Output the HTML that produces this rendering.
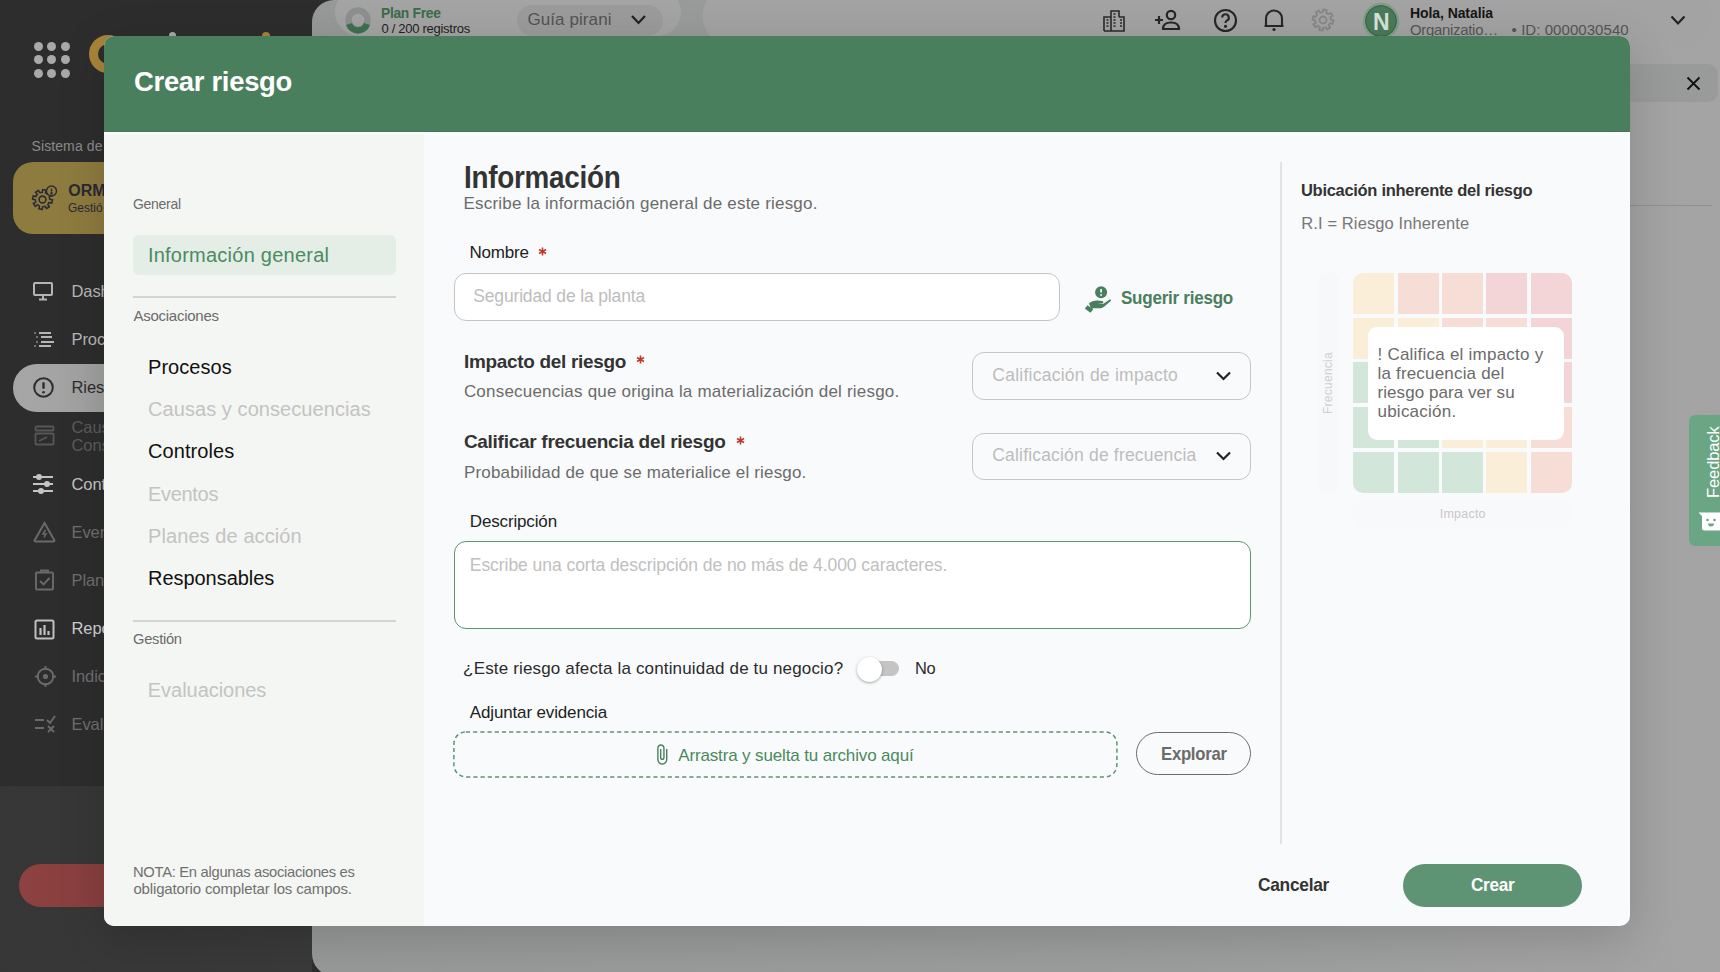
<!DOCTYPE html>
<html><head><meta charset="utf-8">
<style>
*{box-sizing:border-box;margin:0;padding:0}
html,body{width:1720px;height:972px;overflow:hidden;font-family:"Liberation Sans",sans-serif}
body{background:#2d2d2d;position:relative}
.a{position:absolute}
.t{position:absolute;white-space:nowrap;line-height:1}
</style></head>
<body>
<div class="a" style="left:0px;top:786px;width:312px;height:186px;background:linear-gradient(90deg,#363636,#3a3a3a);"></div>
<div class="a" style="left:312px;top:0px;width:1408px;height:976px;background:linear-gradient(90deg,#979998 0%,#9c9e9d 60%,#a3a4a3 100%);border-radius:22px 0 0 22px;"></div>
<div class="a" style="left:335px;top:-12px;width:346px;height:48px;background:#a4a4a4;border-radius:24px;"></div>
<div class="a" style="left:517px;top:5px;width:146px;height:31px;background:#9b9b9b;border-radius:16px;"></div>
<div class="a" style="left:703px;top:-12px;width:1008px;height:56px;background:#a3a3a3;border-radius:26px;"></div>
<div class="a" style="left:1600px;top:64px;width:118px;height:38px;background:#999b9a;border-radius:10px;"></div>
<div class="a" style="left:1630px;top:205px;width:82px;height:1px;background:#909090;"></div>
<svg class="a" style="left:344px;top:6px" width="28" height="28" viewBox="0 0 28 28"><circle cx="14" cy="14" r="9.5" fill="none" stroke="#8e908f" stroke-width="6.5"/><path d="M5 18 A9.5 9.5 0 0 0 23 18" fill="none" stroke="#3f7050" stroke-width="6.5"/></svg>
<div class="t" style="left:381.4px;top:6.0px;font-size:14px;color:#3a6b4b;font-weight:700;letter-spacing:-0.30px;transform:scaleX(0.9879);transform-origin:0 0;">Plan Free</div>
<div class="t" style="left:381.4px;top:22.0px;font-size:13px;color:#1e1e1e;letter-spacing:-0.28px;transform:scaleX(1.0000);transform-origin:0 0;">0 / 200 registros</div>
<div class="t" style="left:527.4px;top:11.2px;font-size:17px;color:#535353;letter-spacing:0.09px;">Guía pirani</div>
<svg class="a" style="left:630px;top:14px" width="17" height="12" viewBox="0 0 17 12"><path d="M2 2 L8.5 9 L15 2" fill="none" stroke="#222" stroke-width="2.2"/></svg>
<svg class="a" style="left:1102px;top:9px" width="24" height="23" viewBox="0 0 24 23" fill="none" stroke="#2a2a2a" stroke-width="1.6">
<path d="M2 22 V8 H9 V22 M9 22 V2 H17 V8 M17 8 H22 V22 H2"/>
<path d="M4.5 11h2M4.5 14h2M4.5 17h2M11.5 5h2M11.5 8h2M11.5 11h2M11.5 14h2M11.5 17h2M18 11h2M18 14h2M18 17h2" stroke-width="1.4"/></svg>
<svg class="a" style="left:1154px;top:9px" width="28" height="22" viewBox="0 0 28 22" fill="none" stroke="#262626" stroke-width="2.2">
<path d="M1 11h8M5 7v8"/><circle cx="17" cy="6" r="4.2"/><path d="M9 20 c0-5 4-6.5 8-6.5 s8 1.5 8 6.5 z"/></svg>
<svg class="a" style="left:1213px;top:8px" width="25" height="25" viewBox="0 0 25 25" fill="none" stroke="#262626" stroke-width="2.1">
<circle cx="12.5" cy="12.5" r="10.5"/><path d="M9.2 9.6 a3.3 3.3 0 1 1 4.6 3 c-1 .5-1.3 1.2-1.3 2.3"/><circle cx="12.5" cy="18.3" r="0.6" fill="#262626"/></svg>
<svg class="a" style="left:1263px;top:8px" width="22" height="24" viewBox="0 0 22 24" fill="none" stroke="#262626" stroke-width="2.1">
<path d="M3 18 V10.5 a8 8 0 0 1 16 0 V18 Z M1.5 18 H20.5"/><circle cx="11" cy="21.5" r="1.6" fill="#262626" stroke="none"/></svg>
<svg class="a" style="left:1311px;top:8px" width="24" height="24" viewBox="0 0 24 24" fill="none" stroke="#878787" stroke-width="1.8" stroke-linejoin="round">
<path d="M19.65 10.48 L19.80 11.82 L22.50 12.21 L21.78 15.83 L19.13 15.15 L18.49 16.33 L17.64 17.38 L19.28 19.57 L16.21 21.62 L14.81 19.27 L13.52 19.65 L12.18 19.80 L11.79 22.50 L8.17 21.78 L8.85 19.13 L7.67 18.49 L6.62 17.64 L4.43 19.28 L2.38 16.21 L4.73 14.81 L4.35 13.52 L4.20 12.18 L1.50 11.79 L2.22 8.17 L4.87 8.85 L5.51 7.67 L6.36 6.62 L4.72 4.43 L7.79 2.38 L9.19 4.73 L10.48 4.35 L11.82 4.20 L12.21 1.50 L15.83 2.22 L15.15 4.87 L16.33 5.51 L17.38 6.36 L19.57 4.72 L21.62 7.79 L19.27 9.19Z"/><circle cx="12" cy="12" r="3.5"/></svg>
<svg class="a" style="left:1362px;top:2px" width="38" height="38" viewBox="0 0 38 38"><circle cx="19" cy="19" r="17" fill="#4a7a5b" stroke="#7f9e89" stroke-width="2.4"/><circle cx="19" cy="19" r="15.3" fill="none" stroke="#3a6349" stroke-width="1"/><text x="19.3" y="27.6" text-anchor="middle" font-family="Liberation Sans" font-weight="bold" font-size="23" fill="#d8e2db">N</text></svg>
<div class="t" style="left:1410.0px;top:5.6px;font-size:14px;color:#161616;font-weight:700;letter-spacing:-0.08px;transform:scaleX(1.0000);transform-origin:0 0;">Hola, Natalia</div>
<div class="t" style="left:1410.0px;top:21.5px;font-size:15px;color:#555;letter-spacing:-0.30px;transform:scaleX(0.9964);transform-origin:0 0;">Organizatio…</div>
<div class="t" style="left:1511.6px;top:21.5px;font-size:15px;color:#555;letter-spacing:0.06px;">• ID: 0000030540</div>
<svg class="a" style="left:1670px;top:15px" width="16" height="11" viewBox="0 0 16 11"><path d="M1.5 1.5 L8 8.5 L14.5 1.5" fill="none" stroke="#222" stroke-width="2.2"/></svg>
<svg class="a" style="left:1686px;top:76px" width="15" height="15" viewBox="0 0 15 15"><path d="M1.5 1.5 L13.5 13.5 M13.5 1.5 L1.5 13.5" stroke="#111" stroke-width="1.9"/></svg>
<div class="a" style="left:1689px;top:415px;width:40px;height:131px;background:#6aa584;border-radius:6px;"></div>
<div class="t" style="left:1704.5px;top:498px;transform:rotate(-90deg);transform-origin:0 0;font-size:16.5px;color:#fff;letter-spacing:-0.1px">Feedback</div>
<svg class="a" style="left:1698px;top:511px" width="22" height="21" viewBox="0 0 22 21"><path d="M0.5 1.5 H22 V19.5 H6.5 a2.5 2.5 0 0 1-2.5-2.5 V5 Z" fill="#fff"/><circle cx="9.5" cy="9" r="1.3" fill="#6aa584"/><circle cx="16.5" cy="9" r="1.3" fill="#6aa584"/><path d="M10 12.5 h6 a3 3 0 0 1-6 0z" fill="#6aa584"/></svg>
<div class="a" style="left:33.5px;top:41.5px;width:9.2px;height:9.2px;background:#a9a9a9;border-radius:50%;"></div>
<div class="a" style="left:33.5px;top:55.3px;width:9.2px;height:9.2px;background:#a9a9a9;border-radius:50%;"></div>
<div class="a" style="left:33.5px;top:69.3px;width:9.2px;height:9.2px;background:#a9a9a9;border-radius:50%;"></div>
<div class="a" style="left:47.1px;top:41.5px;width:9.2px;height:9.2px;background:#a9a9a9;border-radius:50%;"></div>
<div class="a" style="left:47.1px;top:55.3px;width:9.2px;height:9.2px;background:#a9a9a9;border-radius:50%;"></div>
<div class="a" style="left:47.1px;top:69.3px;width:9.2px;height:9.2px;background:#a9a9a9;border-radius:50%;"></div>
<div class="a" style="left:60.9px;top:41.5px;width:9.2px;height:9.2px;background:#a9a9a9;border-radius:50%;"></div>
<div class="a" style="left:60.9px;top:55.3px;width:9.2px;height:9.2px;background:#a9a9a9;border-radius:50%;"></div>
<div class="a" style="left:60.9px;top:69.3px;width:9.2px;height:9.2px;background:#a9a9a9;border-radius:50%;"></div>
<svg class="a" style="left:86px;top:32px" width="44" height="44" viewBox="0 0 44 44"><circle cx="22" cy="22" r="14.5" fill="none" stroke="#a9843a" stroke-width="9"/></svg>
<div class="a" style="left:168.5px;top:32px;width:7.5px;height:7.5px;background:#a9a9a9;border-radius:50%;"></div>
<div class="a" style="left:261.5px;top:32px;width:8px;height:8px;background:#a9843a;border-radius:50%;"></div>
<div class="t" style="left:31.5px;top:139.1px;font-size:14px;color:#8a8a8a;letter-spacing:0.10px;">Sistema de</div>
<div class="a" style="left:13px;top:162px;width:150px;height:72px;background:#8e7b3f;border-radius:20px;"></div>
<svg class="a" style="left:28px;top:184px" width="30" height="30" viewBox="0 0 30 30" fill="none" stroke="#2b2b33" stroke-width="1.6" stroke-linejoin="round">
<path d="M21.56 14.10 L21.70 15.33 L24.50 15.70 L23.81 19.14 L21.09 18.41 L20.49 19.50 L19.71 20.47 L21.43 22.71 L18.51 24.66 L17.10 22.22 L15.90 22.56 L14.67 22.70 L14.30 25.50 L10.86 24.81 L11.59 22.09 L10.50 21.49 L9.53 20.71 L7.29 22.43 L5.34 19.51 L7.78 18.10 L7.44 16.90 L7.30 15.67 L4.50 15.30 L5.19 11.86 L7.91 12.59 L8.51 11.50 L9.29 10.53 L7.57 8.29 L10.49 6.34 L11.90 8.78 L13.10 8.44 L14.33 8.30 L14.70 5.50 L18.14 6.19 L17.41 8.91 L18.50 9.51 L19.47 10.29 L21.71 8.57 L23.66 11.49 L21.22 12.90Z"/><circle cx="14.5" cy="15.5" r="3.4"/>
<circle cx="23.5" cy="7" r="5" fill="#8e7b3f" stroke-width="1.4"/><path d="M23.5 4.6v3" stroke-width="1.5"/><circle cx="23.5" cy="9.4" r=".5" fill="#2b2b33"/></svg>
<div class="t" style="left:68.2px;top:183.0px;font-size:16px;color:#2a2a33;font-weight:700;">ORM</div>
<div class="t" style="left:68.0px;top:202.0px;font-size:12px;color:#2a2a33;">Gestió</div>
<div class="a" style="left:13px;top:364px;width:150px;height:48px;background:linear-gradient(90deg,#a6a6a6,#9e9e9e);border-radius:24px;"></div>
<div class="t" style="left:71.5px;top:283.0px;font-size:16.5px;color:#b8b8b8;letter-spacing:-0.10px;">Dash</div>
<div class="t" style="left:71.5px;top:331.0px;font-size:16.5px;color:#b8b8b8;letter-spacing:-0.10px;">Proc</div>
<div class="t" style="left:71.5px;top:379.3px;font-size:16.5px;color:#2d2d2d;letter-spacing:-0.10px;">Ries</div>
<div class="t" style="left:71.5px;top:476.2px;font-size:16.5px;color:#c4c4c4;letter-spacing:-0.10px;">Cont</div>
<div class="t" style="left:71.5px;top:523.5px;font-size:16.5px;color:#6f6f6f;letter-spacing:-0.10px;">Even</div>
<div class="t" style="left:71.5px;top:572.2px;font-size:16.5px;color:#6f6f6f;letter-spacing:-0.10px;">Plan</div>
<div class="t" style="left:71.5px;top:619.8px;font-size:16.5px;color:#d0d0d0;letter-spacing:-0.10px;">Repo</div>
<div class="t" style="left:71.5px;top:668.0px;font-size:16.5px;color:#6f6f6f;letter-spacing:-0.10px;">Indic</div>
<div class="t" style="left:71.5px;top:716.0px;font-size:16.5px;color:#6f6f6f;letter-spacing:-0.10px;">Evalu</div>
<div class="t" style="left:71.5px;top:418.6px;font-size:16.5px;color:#5c5c5c;letter-spacing:-0.10px;">Caus</div>
<div class="t" style="left:71.5px;top:436.6px;font-size:16.5px;color:#5c5c5c;letter-spacing:-0.10px;">Cons</div>
<svg class="a" style="left:32px;top:281px" width="22" height="20" viewBox="0 0 22 20" fill="none" stroke="#b5b5b5" stroke-width="2">
<rect x="2" y="2" width="18" height="12" rx="1"/><path d="M11 14v4M7 18.5h8"/></svg>
<svg class="a" style="left:33px;top:331px" width="22" height="17" viewBox="0 0 22 17" fill="none" stroke="#b5b5b5" stroke-width="1.8">
<path d="M6 2h12M8 6h11M8 11h13M6 15h12M1.5 2h1M3.5 6h1M3.5 11h1M1.5 15h1"/></svg>
<svg class="a" style="left:32px;top:376px" width="23" height="23" viewBox="0 0 23 23" fill="none" stroke="#2d2d2d" stroke-width="2">
<circle cx="11.5" cy="11.5" r="9.3"/><path d="M11.5 6.3v6.4" stroke-width="2.4"/><circle cx="11.5" cy="16.2" r="1.3" fill="#2d2d2d" stroke="none"/></svg>
<svg class="a" style="left:34px;top:425px" width="21" height="21" viewBox="0 0 21 21" fill="none" stroke="#575757" stroke-width="1.8">
<rect x="1.5" y="1.5" width="18" height="4" rx="1"/><rect x="1.5" y="8.5" width="18" height="11" rx="1"/><path d="M5 16 L13 12"/></svg>
<svg class="a" style="left:32px;top:474px" width="22" height="20" viewBox="0 0 22 20" fill="none" stroke="#c4c4c4" stroke-width="2">
<path d="M1 3h20M1 10h20M1 17h20"/><circle cx="7" cy="3" r="2" fill="#c4c4c4"/><circle cx="15" cy="10" r="2" fill="#c4c4c4"/><circle cx="9" cy="17" r="2" fill="#c4c4c4"/></svg>
<svg class="a" style="left:33px;top:521px" width="23" height="22" viewBox="0 0 23 22" fill="none" stroke="#6a6a6a" stroke-width="2">
<path d="M11.5 2 L21.5 19.5 a1 1 0 0 1-1 1 H2.5 a1 1 0 0 1-1-1 Z"/><path d="M12.5 9 l-2.5 4h3l-2 3.5" stroke-width="1.5"/></svg>
<svg class="a" style="left:34px;top:569px" width="21" height="22" viewBox="0 0 21 22" fill="none" stroke="#6a6a6a" stroke-width="1.9">
<rect x="2" y="3.5" width="17" height="17" rx="1"/><path d="M7 3.5v-2h7v2"/><path d="M6 12 l3.5 3.5 L15.5 9"/></svg>
<svg class="a" style="left:34px;top:619px" width="21" height="21" viewBox="0 0 21 21" fill="none" stroke="#c0c0c0" stroke-width="2">
<rect x="1.5" y="1.5" width="18" height="18" rx="1.5"/><path d="M6.5 9v7M10.5 6v10M14.5 12v4" stroke-width="2.2"/></svg>
<svg class="a" style="left:34px;top:665px" width="23" height="23" viewBox="0 0 23 23" fill="none" stroke="#6a6a6a" stroke-width="1.9">
<circle cx="11.5" cy="11.5" r="7.8"/><path d="M11.5 1v4M11.5 18v4M1 11.5h4M18 11.5h4"/><circle cx="11.5" cy="11.5" r="1.6" fill="#6a6a6a"/></svg>
<svg class="a" style="left:34px;top:715px" width="22" height="19" viewBox="0 0 22 19" fill="none" stroke="#6a6a6a" stroke-width="1.9">
<path d="M1 5h9M1 13h9M13 5l3 3 5-7M14 11l6 6M20 11l-6 6"/></svg>
<div class="a" style="left:19px;top:864px;width:160px;height:43px;background:linear-gradient(90deg,#8d4141,#843d3d);border-radius:22px;"></div>
<div class="a" style="left:104px;top:36px;width:1526px;height:890px;border-radius:10px;overflow:hidden;background:#f9fafb;box-shadow:0 12px 48px rgba(0,0,0,.16)">
<div class="a" style="left:0;top:0;width:1526px;height:96px;background:#4a7f5e"></div>
<div class="a" style="left:0;top:95px;width:1526px;height:1px;background:#427758"></div>
<div class="a" style="left:0;top:96px;width:1526px;height:2px;background:#fdfdfd"></div>
<div class="a" style="left:0;top:98px;width:320px;height:800px;background:#f4f6f3"></div>
</div>
<div class="t" style="left:134.0px;top:67.8px;font-size:28px;color:#fff;font-weight:700;letter-spacing:-0.30px;transform:scaleX(0.9791);transform-origin:0 0;">Crear riesgo</div>
<div class="t" style="left:133.4px;top:195.6px;font-size:15px;color:#6b6b6b;letter-spacing:-0.30px;transform:scaleX(0.9322);transform-origin:0 0;">General</div>
<div class="a" style="left:133px;top:235px;width:263px;height:40px;background:#e4ede6;border-radius:6px;"></div>
<div class="t" style="left:147.9px;top:244.6px;font-size:20px;color:#4b8b5f;letter-spacing:0.24px;">Información general</div>
<div class="a" style="left:133px;top:296px;width:263px;height:2px;background:#d2d3d2;"></div>
<div class="t" style="left:133.4px;top:307.7px;font-size:15px;color:#6b6b6b;letter-spacing:-0.25px;transform:scaleX(1.0000);transform-origin:0 0;">Asociaciones</div>
<div class="t" style="left:148.0px;top:357.3px;font-size:20px;color:#111;letter-spacing:0.05px;">Procesos</div>
<div class="t" style="left:148.0px;top:399.3px;font-size:20px;color:#c3c3c3;letter-spacing:0.07px;">Causas y consecuencias</div>
<div class="t" style="left:148.0px;top:441.3px;font-size:20px;color:#111;letter-spacing:0.09px;">Controles</div>
<div class="t" style="left:148.0px;top:483.5px;font-size:20px;color:#c3c3c3;letter-spacing:-0.30px;transform:scaleX(0.9991);transform-origin:0 0;">Eventos</div>
<div class="t" style="left:148.0px;top:525.5px;font-size:20px;color:#c3c3c3;letter-spacing:0.09px;">Planes de acción</div>
<div class="t" style="left:148.0px;top:567.8px;font-size:20px;color:#111;letter-spacing:-0.04px;transform:scaleX(1.0000);transform-origin:0 0;">Responsables</div>
<div class="a" style="left:133px;top:620px;width:263px;height:2px;background:#d2d3d2;"></div>
<div class="t" style="left:133.4px;top:631.1px;font-size:15px;color:#6b6b6b;letter-spacing:-0.30px;transform:scaleX(0.9818);transform-origin:0 0;">Gestión</div>
<div class="t" style="left:147.8px;top:680.3px;font-size:20px;color:#c3c3c3;letter-spacing:-0.04px;transform:scaleX(1.0000);transform-origin:0 0;">Evaluaciones</div>
<div class="t" style="left:133.4px;top:864.2px;font-size:15px;color:#707070;letter-spacing:-0.30px;transform:scaleX(0.9838);transform-origin:0 0;">NOTA: En algunas asociaciones es</div>
<div class="t" style="left:133.4px;top:880.5px;font-size:15px;color:#707070;letter-spacing:-0.15px;transform:scaleX(1.0000);transform-origin:0 0;">obligatorio completar los campos.</div>
<div class="t" style="left:464.3px;top:161.0px;font-size:32px;color:#333;font-weight:700;letter-spacing:-0.30px;transform:scaleX(0.8697);transform-origin:0 0;">Información</div>
<div class="t" style="left:463.5px;top:195.3px;font-size:17px;color:#6b6b6b;letter-spacing:0.20px;">Escribe la información general de este riesgo.</div>
<div class="t" style="left:469.5px;top:244.4px;font-size:17px;color:#222;letter-spacing:-0.19px;transform:scaleX(1.0000);transform-origin:0 0;">Nombre</div>
<svg class="a" style="left:538px;top:246.5px" width="9" height="9" viewBox="0 0 9 9"><path d="M4.5 0.5v8M1 2.5l7 4M8 2.5l-7 4" stroke="#c0392b" stroke-width="1.6"/></svg>
<div class="a" style="left:453.5px;top:273.2px;width:606px;height:47.5px;background:#fff;border-radius:12px;border:1.3px solid #c4c4c4;"></div>
<div class="t" style="left:473.2px;top:287.6px;font-size:17.5px;color:#bdbdbd;letter-spacing:-0.15px;transform:scaleX(1.0000);transform-origin:0 0;">Seguridad de la planta</div>
<svg class="a" style="left:1080px;top:283px" width="34" height="30" viewBox="0 0 34 30">
<circle cx="21.1" cy="9.2" r="6" fill="#4a7f5e"/><path d="M21.1 5.9v3.6" stroke="#fff" stroke-width="1.7"/><circle cx="21.1" cy="11.9" r=".95" fill="#fff"/>
<path d="M9 20.3 Q12.5 17.2 17.5 17.6 L22.3 18 Q23.8 18.4 23.2 19.9 L18 20.6 L23.5 20.8 L29.6 16.6 Q31.2 16.2 31 17.8 L24 23.8 Q22.6 25.2 20.5 25.2 L13 25.2 L11.3 26.8 Z" fill="#4a7f5e"/>
<path d="M7.6 22.2 L13.2 26.6 L10.4 29.8 L4.8 25.4 Z" fill="#4a7f5e"/></svg>
<div class="t" style="left:1121.3px;top:288.2px;font-size:19px;color:#4a7f5e;font-weight:700;letter-spacing:-0.30px;transform:scaleX(0.8987);transform-origin:0 0;">Sugerir riesgo</div>
<div class="t" style="left:463.9px;top:351.7px;font-size:19px;color:#333;font-weight:700;letter-spacing:-0.30px;transform:scaleX(0.9971);transform-origin:0 0;">Impacto del riesgo</div>
<svg class="a" style="left:636.2px;top:355px" width="9" height="9" viewBox="0 0 9 9"><path d="M4.5 0.5v8M1 2.5l7 4M8 2.5l-7 4" stroke="#c0392b" stroke-width="1.6"/></svg>
<div class="t" style="left:463.9px;top:383.1px;font-size:17px;color:#6b6b6b;letter-spacing:0.20px;">Consecuencias que origina la materialización del riesgo.</div>
<div class="a" style="left:972px;top:352.2px;width:279px;height:47.5px;background:transparent;border-radius:12px;border:1.3px solid #c6c6c6;"></div>
<div class="t" style="left:992.3px;top:367.1px;font-size:17.5px;color:#bdbdbd;letter-spacing:0.25px;">Calificación de impacto</div>
<svg class="a" style="left:1215px;top:370px" width="17" height="12" viewBox="0 0 17 12"><path d="M2 2.5 L8.5 9 L15 2.5" fill="none" stroke="#222" stroke-width="2.2"/></svg>
<div class="t" style="left:463.9px;top:432.4px;font-size:19px;color:#333;font-weight:700;letter-spacing:-0.28px;transform:scaleX(1.0000);transform-origin:0 0;">Calificar frecuencia del riesgo</div>
<svg class="a" style="left:735.7px;top:435.5px" width="9" height="9" viewBox="0 0 9 9"><path d="M4.5 0.5v8M1 2.5l7 4M8 2.5l-7 4" stroke="#c0392b" stroke-width="1.6"/></svg>
<div class="t" style="left:463.9px;top:463.9px;font-size:17px;color:#6b6b6b;letter-spacing:0.18px;">Probabilidad de que se materialice el riesgo.</div>
<div class="a" style="left:972px;top:432.8px;width:279px;height:47.5px;background:transparent;border-radius:12px;border:1.3px solid #c6c6c6;"></div>
<div class="t" style="left:992.3px;top:447.3px;font-size:17.5px;color:#bdbdbd;letter-spacing:0.18px;">Calificación de frecuencia</div>
<svg class="a" style="left:1215px;top:450px" width="17" height="12" viewBox="0 0 17 12"><path d="M2 2.5 L8.5 9 L15 2.5" fill="none" stroke="#222" stroke-width="2.2"/></svg>
<div class="t" style="left:469.8px;top:512.8px;font-size:17px;color:#222;letter-spacing:-0.15px;transform:scaleX(1.0000);transform-origin:0 0;">Descripción</div>
<div class="a" style="left:453.5px;top:541.4px;width:797.5px;height:88px;background:#fff;border-radius:12px;border:1.4px solid #5d9571;"></div>
<div class="t" style="left:469.8px;top:556.8px;font-size:17.5px;color:#c0c0c0;letter-spacing:-0.05px;transform:scaleX(1.0000);transform-origin:0 0;">Escribe una corta descripción de no más de 4.000 caracteres.</div>
<div class="t" style="left:463.1px;top:660.3px;font-size:17px;color:#2b2b2b;letter-spacing:0.16px;">¿Este riesgo afecta la continuidad de tu negocio?</div>
<div class="a" style="left:863px;top:661px;width:36px;height:15px;background:#c4c4c4;border-radius:8px;"></div>
<div class="a" style="left:856.5px;top:657px;width:25px;height:25px;background:#fff;border-radius:50%;box-shadow:0 1px 3px rgba(0,0,0,.35);"></div>
<div class="t" style="left:915.1px;top:660.1px;font-size:17px;color:#2b2b2b;letter-spacing:-0.30px;transform:scaleX(0.9653);transform-origin:0 0;">No</div>
<div class="t" style="left:469.8px;top:703.9px;font-size:17px;color:#222;letter-spacing:-0.15px;transform:scaleX(1.0000);transform-origin:0 0;">Adjuntar evidencia</div>
<svg class="a" style="left:453px;top:731px" width="665" height="47" viewBox="0 0 665 47"><rect x="0.9" y="0.9" width="663" height="45" rx="12" fill="none" stroke="#5d9571" stroke-width="1.5" stroke-dasharray="4.2 3"/></svg>
<svg class="a" style="left:650px;top:743px" width="24" height="23" viewBox="0 0 24 23"><g transform="translate(12.3 11.5) scale(0.93) translate(-12.5 -12)"><path fill="#4a7f5e" d="M16.5 6v11.5c0 2.21-1.79 4-4 4s-4-1.79-4-4V5c0-1.38 1.12-2.5 2.5-2.5s2.5 1.12 2.5 2.5v10.5c0 .55-.45 1-1 1s-1-.45-1-1V6H10v9.5c0 1.38 1.120 2.5 2.5 2.5s2.5-1.12 2.5-2.5V5c0-2.21-1.790-4-4-4S7 2.79 7 5v12.5c0 3.04 2.46 5.5 5.5 5.5s5.5-2.46 5.5-5.5V6h-1.5z"/></g></svg>
<div class="t" style="left:678.2px;top:746.9px;font-size:17px;color:#4a8a5e;letter-spacing:-0.14px;transform:scaleX(1.0000);transform-origin:0 0;">Arrastra y suelta tu archivo aquí</div>
<div class="a" style="left:1135.8px;top:731.6px;width:115.7px;height:43px;background:transparent;border-radius:22px;border:1.4px solid #6b6b6b;"></div>
<div class="t" style="left:1161.0px;top:744.2px;font-size:19px;color:#6b6b6b;font-weight:700;letter-spacing:-0.30px;transform:scaleX(0.8796);transform-origin:0 0;">Explorar</div>
<div class="a" style="left:1280px;top:162px;width:1.5px;height:682px;background:#e1e2e3;"></div>
<div class="t" style="left:1301.3px;top:181.8px;font-size:16.5px;color:#333;font-weight:700;letter-spacing:-0.30px;transform:scaleX(0.9999);transform-origin:0 0;">Ubicación inherente del riesgo</div>
<div class="t" style="left:1301.3px;top:215.3px;font-size:16.5px;color:#777;letter-spacing:0.11px;">R.I = Riesgo Inherente</div>
<div class="a" style="left:1318px;top:272px;width:21px;height:221px;background:#f7f8f9;border-radius:10px;"></div>
<div class="a" style="left:1353px;top:500px;width:219px;height:28px;background:#f8f9fa;border-radius:10px;"></div>
<div class="a" style="left:1353px;top:273px;width:41px;height:41px;background:#fbeed9;border-radius:10px 0 0 0;"></div>
<div class="a" style="left:1397.6px;top:273px;width:41px;height:41px;background:#f6ddd5;"></div>
<div class="a" style="left:1442.2px;top:273px;width:41px;height:41px;background:#f6ddd5;"></div>
<div class="a" style="left:1486.4px;top:273px;width:41px;height:41px;background:#f3d5d8;"></div>
<div class="a" style="left:1531px;top:273px;width:41px;height:41px;background:#f3d5d8;border-radius:0 10px 0 0;"></div>
<div class="a" style="left:1353px;top:317.6px;width:41px;height:41px;background:#fbeed9;"></div>
<div class="a" style="left:1397.6px;top:317.6px;width:41px;height:41px;background:#fbeed9;"></div>
<div class="a" style="left:1442.2px;top:317.6px;width:41px;height:41px;background:#f6ddd5;"></div>
<div class="a" style="left:1486.4px;top:317.6px;width:41px;height:41px;background:#f6ddd5;"></div>
<div class="a" style="left:1531px;top:317.6px;width:41px;height:41px;background:#f3d5d8;"></div>
<div class="a" style="left:1353px;top:362.2px;width:41px;height:41px;background:#d3e6da;"></div>
<div class="a" style="left:1397.6px;top:362.2px;width:41px;height:41px;background:#fbeed9;"></div>
<div class="a" style="left:1442.2px;top:362.2px;width:41px;height:41px;background:#fbeed9;"></div>
<div class="a" style="left:1486.4px;top:362.2px;width:41px;height:41px;background:#f6ddd5;"></div>
<div class="a" style="left:1531px;top:362.2px;width:41px;height:41px;background:#f3d5d8;"></div>
<div class="a" style="left:1353px;top:407px;width:41px;height:41px;background:#d3e6da;"></div>
<div class="a" style="left:1397.6px;top:407px;width:41px;height:41px;background:#d3e6da;"></div>
<div class="a" style="left:1442.2px;top:407px;width:41px;height:41px;background:#fbeed9;"></div>
<div class="a" style="left:1486.4px;top:407px;width:41px;height:41px;background:#fbeed9;"></div>
<div class="a" style="left:1531px;top:407px;width:41px;height:41px;background:#f6ddd5;"></div>
<div class="a" style="left:1353px;top:451.6px;width:41px;height:41px;background:#d3e6da;border-radius:0 0 0 10px;"></div>
<div class="a" style="left:1397.6px;top:451.6px;width:41px;height:41px;background:#d3e6da;"></div>
<div class="a" style="left:1442.2px;top:451.6px;width:41px;height:41px;background:#d3e6da;"></div>
<div class="a" style="left:1486.4px;top:451.6px;width:41px;height:41px;background:#fbeed9;"></div>
<div class="a" style="left:1531px;top:451.6px;width:41px;height:41px;background:#f6ddd5;border-radius:0 0 10px 0;"></div>
<div class="a" style="left:1367.8px;top:326.7px;width:196.4px;height:113.3px;background:#fff;border-radius:9px;"></div>
<div class="t" style="left:1377.5px;top:346.2px;font-size:17px;color:#6b6b6b;letter-spacing:0.23px;">! Califica el impacto y</div>
<div class="t" style="left:1377.5px;top:365.0px;font-size:17px;color:#6b6b6b;letter-spacing:0.18px;">la frecuencia del</div>
<div class="t" style="left:1377.5px;top:383.9px;font-size:17px;color:#6b6b6b;letter-spacing:0.06px;">riesgo para ver su</div>
<div class="t" style="left:1377.5px;top:403.4px;font-size:17px;color:#6b6b6b;letter-spacing:0.23px;">ubicación.</div>
<div class="t" style="left:1322px;top:414px;transform:rotate(-90deg);transform-origin:0 0;font-size:12px;color:#d0d0d0;letter-spacing:0.26px">Frecuencia</div>
<div class="t" style="left:1439.7px;top:507.7px;font-size:12.5px;color:#c8c8c8;letter-spacing:0.23px;">Impacto</div>
<div class="t" style="left:1258.4px;top:875.2px;font-size:19px;color:#333;font-weight:700;letter-spacing:-0.30px;transform:scaleX(0.9129);transform-origin:0 0;">Cancelar</div>
<div class="a" style="left:1402.6px;top:863.7px;width:179.7px;height:43px;background:#5e9474;border-radius:22px;"></div>
<div class="t" style="left:1470.7px;top:875.2px;font-size:19px;color:#fff;font-weight:700;letter-spacing:-0.30px;transform:scaleX(0.9033);transform-origin:0 0;">Crear</div>
</body></html>
